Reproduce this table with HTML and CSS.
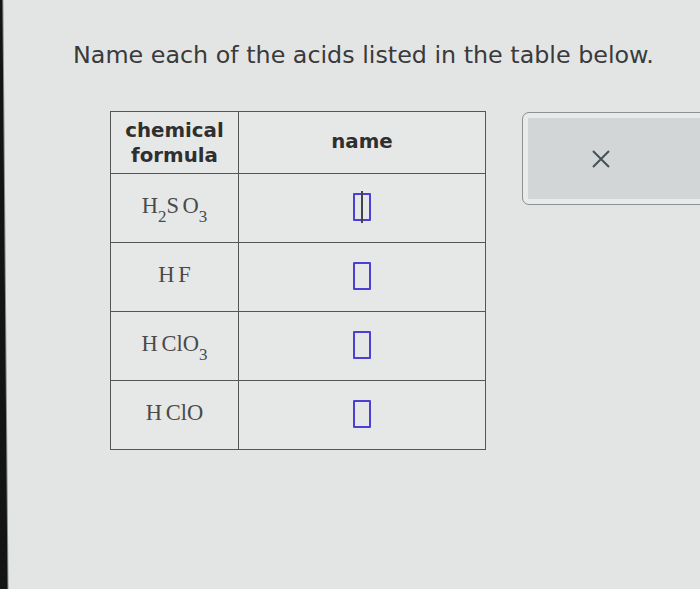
FILE: index.html
```html
<!DOCTYPE html>
<html>
<head>
<meta charset="utf-8">
<link rel="stylesheet" href="styles.css">
</head>
<body>
<div class="page">
  <p class="prompt">Name each of the acids listed in the table below.</p>
  <div class="work">
    <table class="acids">
      <tr class="head">
        <th class="c1">chemical<br>formula</th>
        <th class="c2">name</th>
      </tr>
      <tr>
        <td class="formula">H<sub>2</sub>S O<sub>3</sub></td>
        <td class="answer"><span class="box focused"><span class="caret"></span></span></td>
      </tr>
      <tr>
        <td class="formula">H F</td>
        <td class="answer"><span class="box"></span></td>
      </tr>
      <tr>
        <td class="formula">H ClO<sub>3</sub></td>
        <td class="answer"><span class="box"></span></td>
      </tr>
      <tr>
        <td class="formula">H ClO</td>
        <td class="answer"><span class="box"></span></td>
      </tr>
    </table>
    <div class="side">
      <button class="clear" type="button">
        <svg width="22" height="22" viewBox="0 0 22 22"><path d="M3 3 L19 19 M19 3 L3 19" stroke="#44505a" stroke-width="2" fill="none"/></svg>
      </button>
    </div>
  </div>
</div>
</body>
</html>
```
FILE: styles.css
```css
html, body {
  margin: 0;
  padding: 0;
}
body {
  width: 700px;
  height: 589px;
  overflow: hidden;
  background-color: #e3e5e5;
  background-image: linear-gradient(89.5deg, #141414 0, #141414 7px, #8a8c8c 8px, rgba(227,229,229,0) 9px);
  background-repeat: no-repeat;
  font-family: "DejaVu Sans", Verdana, sans-serif;
  color: #333;
}
.page {
  padding: 39px 0 0 0;
}
.prompt {
  margin: 0 0 0 73px;
  font-size: 23.8px;
  line-height: 32px;
  color: #3a3a3a;
}
.work {
  display: flex;
  align-items: flex-start;
  margin-top: 40px;
  padding-left: 110px;
}
.acids {
  flex-shrink: 0;
  border-collapse: collapse;
  width: 376px;
  background: #e6e8e8;
}
.acids th, .acids td {
  border: 1.5px solid #555;
  padding: 0;
  text-align: center;
}
.head th {
  height: 59px;
  font-weight: bold;
  font-size: 19.8px;
  line-height: 25px;
  color: #2f2f2f;
}
.head .c1 {
  width: 127px;
}
.head .c2 {
  padding-bottom: 2px;
}
.acids td {
  height: 64px;
}
.formula {
  font-family: "Liberation Serif", "Times New Roman", serif;
  font-size: 22.5px;
  color: #4a4a4a;
  word-spacing: -2px;
  padding-bottom: 4px !important;
}
.formula sub {
  font-size: 17px;
  vertical-align: -9px;
  line-height: 0;
}
.answer {
  line-height: 0;
}
.box {
  display: inline-block;
  width: 14px;
  height: 24px;
  border: 2px solid #4b3fd6;
  border-radius: 1px;
  position: relative;
  vertical-align: middle;
  margin-top: -3px;
}
.caret {
  position: absolute;
  left: 6px;
  top: -4px;
  width: 1.5px;
  height: 32px;
  background: #444;
}
.side {
  flex-shrink: 0;
  margin-left: 36px;
  margin-top: 1px;
}
.clear {
  display: flex;
  align-items: center;
  justify-content: center;
  width: 200px;
  height: 93px;
  padding: 0 42px 0 0;
  background: #d2d6d6;
  border: 1.5px solid #8d9191;
  border-radius: 7px;
  box-shadow: inset 0 0 0 5px #e9ebeb;
  cursor: pointer;
}
```
